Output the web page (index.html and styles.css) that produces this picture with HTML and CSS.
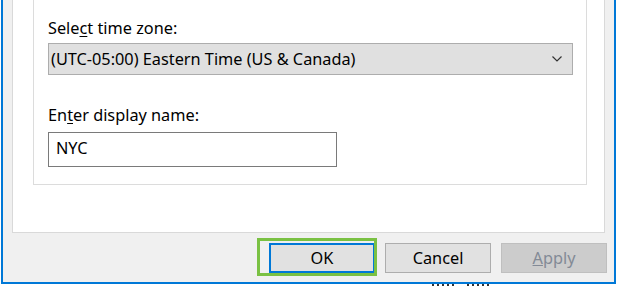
FILE: index.html
```html
<!DOCTYPE html>
<html>
<head>
<meta charset="utf-8">
<link rel="stylesheet" href="styles.css">
</head>
<body>
<div class="window">
  <div class="tabpage">
    <div class="groupbox">
      <label class="label">Sele<u>c</u>t time zone:</label>
      <div class="combo">
        <span class="combo-text">(UTC-05:00) Eastern Time (US &amp; Canada)</span>
        <svg class="chevron" width="10" height="6" viewBox="0 0 10 6"><path d="M0.5 0.5 L5 5 L9.5 0.5" fill="none" stroke="#333" stroke-width="1.2"/></svg>
      </div>
      <label class="label label2">En<u>t</u>er display name:</label>
      <div class="textbox">NYC</div>
    </div>
  </div>
  <div class="buttons">
    <div class="highlight"></div>
    <button class="btn btn-default">OK</button>
    <button class="btn">Cancel</button>
    <button class="btn btn-disabled"><u>A</u>pply</button>
  </div>
</div>
<div class="under">
  <i class="tick"></i><i class="tick"></i><i class="tick"></i><i class="tick"></i><i class="tick"></i><i class="tick gap"></i><i class="tick"></i><i class="tick"></i><i class="tick"></i><i class="tick"></i>
</div>
</body>
</html>
```
FILE: styles.css
```css
* { box-sizing: border-box; }
html, body { margin: 0; padding: 0; }
body {
  background: #ffffff;
  font-family: "Noto Sans", "Open Sans", sans-serif;
  font-size: 16.3px;
  color: #000;
  width: 617px;
  height: 286px;
  overflow: hidden;
}
.window {
  margin-left: 1px;
  width: 615px;
  height: 284px;
  background: #f0f0f0;
  border-left: 2px solid #0078d7;
  border-right: 2px solid #0078d7;
  border-bottom: 2px solid #0078d7;
  display: flex;
  flex-direction: column;
}
.tabpage {
  margin-left: 9px;
  width: 593px;
  height: 233px;
  background: #ffffff;
  border: 1px solid #d9d9d9;
  border-top: none;
  padding-left: 20px;
}
.groupbox {
  width: 554px;
  height: 185px;
  border: 1px solid #dcdcdc;
  border-top: none;
  padding: 17px 0 0 14px;
  display: flex;
  flex-direction: column;
  align-items: flex-start;
}
.label {
  display: block;
  line-height: 22px;
  height: 22px;
}
.label u { text-decoration-thickness: 1px; text-underline-offset: 2px; }
.combo {
  margin-top: 4px;
  width: 525px;
  height: 32px;
  background: #e0e0e0;
  border: 1px solid #adadad;
  display: flex;
  align-items: center;
  justify-content: space-between;
  padding: 0 10px 0 2px;
}
.combo-text { line-height: 22px; }
.chevron { display: block; }
.label2 { margin-top: 29px; }
.textbox {
  margin-top: 6px;
  width: 289px;
  height: 35px;
  background: #ffffff;
  border: 1px solid #7a7a7a;
  padding-left: 7px;
  line-height: 31px;
}
.buttons {
  position: relative;
  display: flex;
  justify-content: flex-end;
  gap: 10px;
  padding: 10px 7px 0 0;
}
.btn {
  width: 106px;
  height: 30px;
  background: #e1e1e1;
  border: 1px solid #adadad;
  font-family: inherit;
  font-size: 16.3px;
  color: #000;
  padding: 0;
  margin: 0;
  line-height: 26px;
}
.btn-default { border: 2px solid #0078d7; }
.btn-disabled {
  background: #cccccc;
  border-color: #bfbfbf;
  color: #838a96;
}
.highlight {
  position: absolute;
  left: 254px;
  top: 5px;
  width: 120px;
  height: 38px;
  border: 3px solid #7ac143;
}
.under {
  height: 2px;
  display: flex;
  gap: 3px;
  padding-left: 432px;
}
.tick {
  display: block;
  width: 2px;
  height: 2px;
  background: #333;
}
.tick.gap { margin-left: 10px; }
```
